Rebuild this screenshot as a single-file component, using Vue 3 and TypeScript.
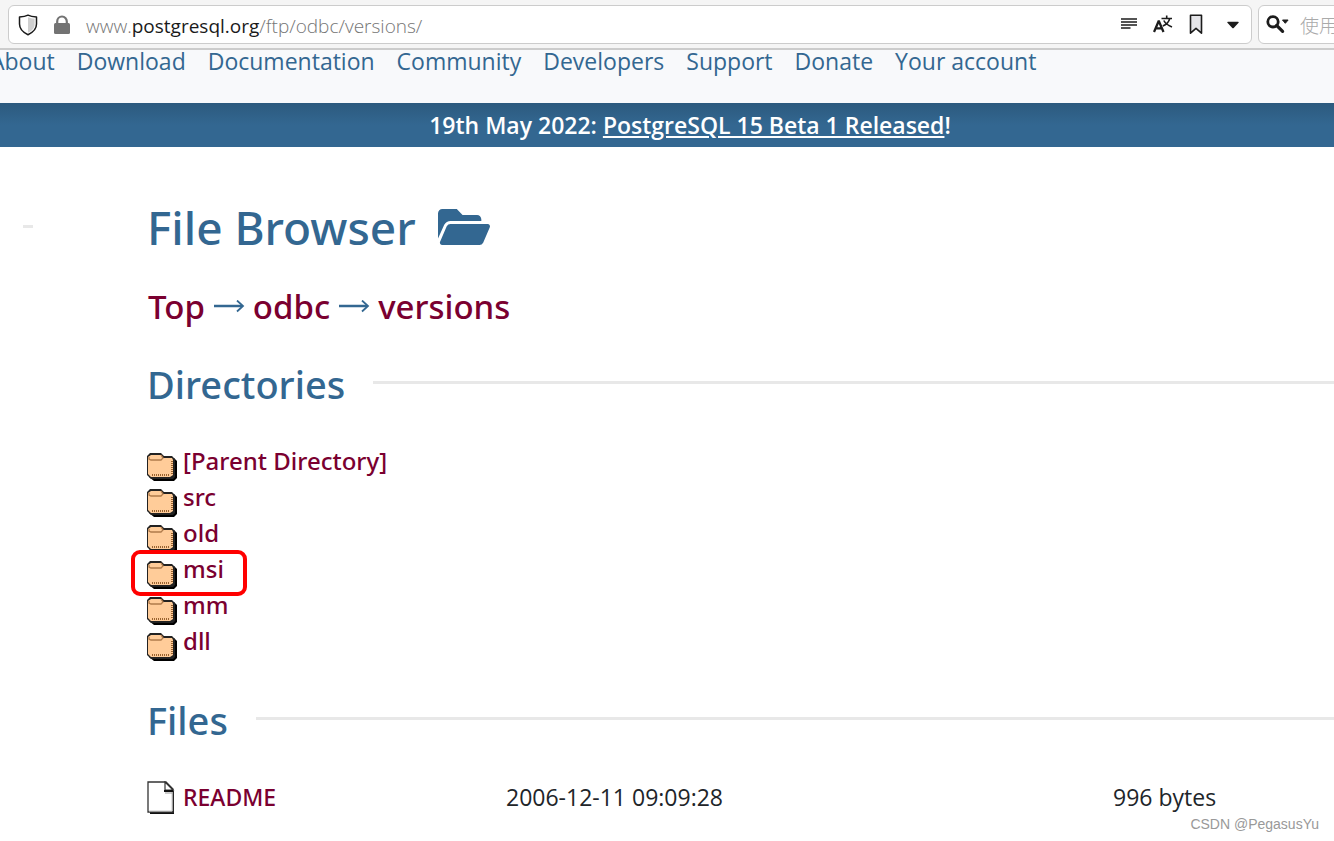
<script setup lang="ts">
const navItems: string[] = ['About', 'Download', 'Documentation', 'Community', 'Developers', 'Support', 'Donate', 'Your account']
const crumbs: string[] = ['Top', 'odbc', 'versions']
const directories: { name: string; marked?: boolean }[] = [
  { name: '[Parent Directory]' },
  { name: 'src' },
  { name: 'old' },
  { name: 'msi', marked: true },
  { name: 'mm' },
  { name: 'dll' },
]
const files = [{ name: 'README', date: '2006-12-11 09:09:28', size: '996 bytes' }]
</script>

<template>
  <div class="page">
    <div class="toolbar">
      <div class="field address">
        <button class="tool" aria-label="Tracking protection">
          <svg width="20" height="22" viewBox="0 0 20 22">
            <path d="M10 3.200c2 .8 4 1.200 6.600 1.300v5.700c0 3.900-2.700 6.600-6.600 8.500z" fill="#cfcfcf" />
            <path d="M10 1.200C7.600 2.400 4.600 2.800 1.500 2.900v7.200c0 5 3.600 8.400 8.500 10.600 4.900-2.200 8.500-5.600 8.500-10.600V2.900C15.400 2.800 12.400 2.400 10 1.200z" fill="none" stroke="#1a1a1a" stroke-width="1.500" stroke-linejoin="round" />
          </svg>
        </button>
        <button class="tool" aria-label="Site information">
          <svg width="16" height="20" viewBox="0 0 16 20">
            <path d="M3.200 10V6.500a4.800 5 0 0 1 9.600 0V10" fill="none" stroke="#737373" stroke-width="2.200" />
            <rect x="0" y="8" width="16" height="11" rx="1.500" fill="#737373" />
          </svg>
        </button>
        <div class="url"><span>www.</span><b>postgresql.org</b><span>/ftp/odbc/versions/</span></div>
        <div class="actions">
          <button class="tool" aria-label="Reader view">
            <svg width="16" height="14" viewBox="0 0 16 14"><path d="M0 1h16M0 4h16M0 7h16M0 10h9.500" stroke="#1c1c1c" stroke-width="1.600" /></svg>
          </button>
          <button class="tool" aria-label="Translate">
            <svg width="20" height="20" viewBox="0 0 20 20" fill="none" stroke="#1c1c1c">
              <path d="M1 17 5.500 6.500h.5L10.500 17M2.700 13.300h6.200" stroke-width="2.300" />
              <path d="M8.500 3.500H19M13.700.5v3M16.800 3.500C15.500 8 12.500 10 9.800 11M10.800 5.500c1.500 3 4.500 5 8.200 6.500" stroke-width="1.600" />
            </svg>
          </button>
          <button class="tool" aria-label="Bookmark">
            <svg width="14" height="22" viewBox="0 0 14 22"><path d="M1.500 1.200h11v18L7 14.300l-5.500 4.900z" fill="#e4e4e8" stroke="#1c1c1c" stroke-width="1.600" stroke-linejoin="round" /></svg>
          </button>
          <button class="tool history" aria-label="Show history">
            <svg width="12" height="8" viewBox="0 0 12 8"><path d="M.8.800h10.400a.6.600 0 0 1 .4 1L6.700 7a1 1 0 0 1-1.400 0L.4 1.800a.6.600 0 0 1 .4-1z" fill="#1c1c1c" /></svg>
          </button>
        </div>
      </div>
      <div class="field search">
        <button class="tool" aria-label="Search engine">
          <svg width="24" height="20" viewBox="0 0 24 20">
            <circle cx="7" cy="6.800" r="5.200" fill="none" stroke="#1c1c1c" stroke-width="2.800" />
            <path d="m10.600 10.400 6 6" stroke="#1c1c1c" stroke-width="3.200" stroke-linecap="round" />
            <path d="M16.500 5h5.600l-2.800 3.300z" fill="#1c1c1c" stroke="#1c1c1c" stroke-linejoin="round" />
          </svg>
        </button>
        <input type="text" placeholder="使用" aria-label="Search" />
      </div>
    </div>

    <nav class="nav">
      <a v-for="item in navItems" :key="item" href="#">{{ item }}</a>
    </nav>

    <div class="banner">19th May 2022:&nbsp;<a href="#">PostgreSQL 15 Beta 1 Released</a>!</div>

    <div class="layout">
      <aside class="side"><hr /></aside>
      <main class="content">
        <h1>
          File Browser
          <svg width="52" height="36" viewBox="0 0 576 384" preserveAspectRatio="none" aria-hidden="true">
            <path d="M572.700 196.100 500.300 360.300A48 48 0 0 1 458.800 384H45c-18.500 0-30-20-20.700-36.100l72.400-164.200A48 48 0 0 1 138.200 160H552c18.500 0 30 20 20.700 36.100zM138.200 128H480V112c0-26.500-21.500-48-48-48H272L208 0H48C21.500 0 0 21.500 0 48v265.700l69.100-145.500C83.400 143.700 109.800 128 138.200 128z" fill="#336791" />
          </svg>
        </h1>
        <h2 class="crumbs">
          <template v-for="(crumb, i) in crumbs" :key="crumb">
            <svg v-if="i > 0" width="32" height="14" viewBox="0 0 32 14" aria-hidden="true">
              <path d="M1 6h28" stroke="#336791" stroke-width="2.500" />
              <path d="m24 .5 6 5.500-6 5.500" fill="none" stroke="#336791" stroke-width="1.800" />
            </svg>
            <a href="#">{{ crumb }}</a>
          </template>
        </h2>

        <h3>Directories</h3>
        <ul class="dirs">
          <li v-for="dir in directories" :key="dir.name" :class="{ marked: dir.marked }">
            <svg class="folder" width="30" height="28" viewBox="0 0 30 28" aria-hidden="true">
              <path d="M4 5h23l3 3v17l-3 3H7l-5-4z" fill="#000" />
              <path d="M3 0h11l3 3h8l3 3v18l-2 2H4l-4-4V3z" fill="#222" />
              <path d="M4 2h10l2 3h9l1 2v15l-3 2H4l-3-3V4z" fill="#fc9" />
              <path d="M2 4v2l2 1h10l2-2-2-3" fill="none" stroke="#b07b4b" stroke-width="1.300" />
              <path d="M25 8v14M5 22h18" fill="none" stroke="#996330" stroke-width="2" stroke-dasharray="1 1" />
            </svg>
            <a href="#">{{ dir.name }}</a>
          </li>
        </ul>

        <h3>Files</h3>
        <table class="files">
          <tbody>
            <tr v-for="file in files" :key="file.name">
              <td class="name">
                <svg width="28" height="34" viewBox="0 0 28 34" aria-hidden="true">
                  <path d="M3 32h23V10" fill="none" stroke="#111" stroke-width="2" />
                  <path d="M1 1h18l7 7v23H1z" fill="#fff" stroke="#333" stroke-width="1.300" />
                  <path d="M2 30h23V11" fill="none" stroke="#ccc" />
                  <path d="M18 1v8h8z" fill="#fff" stroke="#333" stroke-width="1.200" />
                  <path d="M17 10h9" stroke="#111" stroke-width="2" />
                  <path d="M18 12h7" stroke="#999" />
                </svg>
                <a href="#">{{ file.name }}</a>
              </td>
              <td class="date">{{ file.date }}</td>
              <td>{{ file.size }}</td>
            </tr>
          </tbody>
        </table>
      </main>
    </div>
    <div class="watermark">CSDN @PegasusYu</div>
  </div>
</template>

<style>
body {
  margin: 0;
  background: #fff;
}
</style>

<style scoped>
.page {
  position: relative;
  min-height: 100vh;
  overflow: hidden;
  font: 400 23px/36px "Open Sans", "Noto Sans", sans-serif;
  color: #212529;
}
a {
  color: #7a0030;
  text-decoration: none;
}
.toolbar {
  display: flex;
  gap: 6px;
  height: 48px;
  padding: 5px 0 4px 8px;
  box-sizing: border-box;
  background: #f5f5f5;
}
.field {
  display: flex;
  align-items: center;
  box-sizing: border-box;
  border: 1px solid #ccc;
  border-radius: 6px;
  background: #fff;
}
.address {
  flex: 1;
  gap: 16px;
  padding: 0 12px 0 9px;
}
.actions {
  display: flex;
  align-items: center;
  gap: 16px;
}
.history {
  margin-left: 8px;
}
.search {
  flex: none;
  gap: 10px;
  width: 90px;
  margin-right: -14px;
  padding-left: 7px;
}
.tool {
  display: flex;
  flex: none;
  padding: 0;
  border: 0;
  background: none;
}
.url {
  flex: 1;
  padding-top: 2px;
  font-size: 19px;
  font-weight: 300;
  line-height: 28px;
  color: #757575;
}
.url b {
  font-weight: 400;
  color: #1a1a1a;
}
input {
  flex: 1;
  min-width: 0;
  padding: 0;
  border: 0;
  outline: 0;
  background: none;
  font: 300 19px/26px "Noto Sans CJK SC", sans-serif;
}
input::placeholder {
  color: #aaa;
  opacity: 1;
}
.nav {
  display: flex;
  gap: 22px;
  height: 55px;
  margin-left: -10px;
  box-sizing: border-box;
  border-top: 2px solid #ccc;
  background: #f8f9fb;
  line-height: 22px;
  white-space: nowrap;
}
.nav a {
  color: #336791;
}
.banner {
  display: flex;
  justify-content: center;
  height: 44px;
  padding-left: 46px;
  background: linear-gradient(#2c5a7e, #336791 50%);
  color: #fff;
  font-weight: 600;
  line-height: 44px;
}
.banner a {
  color: #fff;
  text-decoration: underline;
}
.layout {
  display: grid;
  grid-template-columns: 147px 1fr;
}
.side hr {
  width: 10px;
  height: 3px;
  margin: 78px 0 0 23px;
  border: 0;
  background: #e8e8e8;
}
.content {
  padding-top: 50px;
}
h1,
h2,
h3 {
  display: flex;
  align-items: center;
  margin: 0;
  color: #336791;
  font-family: "Noto Sans", sans-serif;
  font-weight: 500;
}
h1 {
  gap: 22px;
  font-size: 46px;
  line-height: 60px;
}
.crumbs {
  gap: 8px;
  margin-top: 26px;
  padding-left: 1px;
  font-size: 33px;
  line-height: 48px;
}
h3 {
  gap: 28px;
  margin-top: 29px;
  font-size: 38px;
  line-height: 48px;
}
h3::after {
  flex: 1;
  height: 3px;
  margin-bottom: 4px;
  background: #e8e8e8;
  content: "";
}
.dirs {
  margin: 35px 0 0;
  padding: 0;
  list-style: none;
}
.dirs li {
  position: relative;
  display: flex;
  gap: 6px;
  height: 36px;
  font-family: "Noto Sans", sans-serif;
  font-size: 24px;
  font-weight: 500;
}
.folder {
  margin-top: 10px;
}
.marked::before {
  position: absolute;
  top: -1px;
  left: -16px;
  width: 108px;
  height: 38px;
  border: 4px solid #f00;
  border-radius: 9px;
  content: "";
}
.dirs + h3 {
  margin-top: 37px;
}
.files {
  width: 100%;
  margin-top: 35px;
  border-collapse: collapse;
  table-layout: fixed;
}
td {
  width: 221px;
  padding: 0;
}
.name {
  width: 359px;
  font-family: "Noto Sans", sans-serif;
  font-weight: 500;
}
.name svg {
  float: left;
  margin: 2px 8px 0 0;
}
.date {
  width: auto;
}
.watermark {
  position: absolute;
  right: 15px;
  bottom: 8px;
  color: #999;
  font: 14px/18px "Liberation Sans", Arial, sans-serif;
}
</style>
